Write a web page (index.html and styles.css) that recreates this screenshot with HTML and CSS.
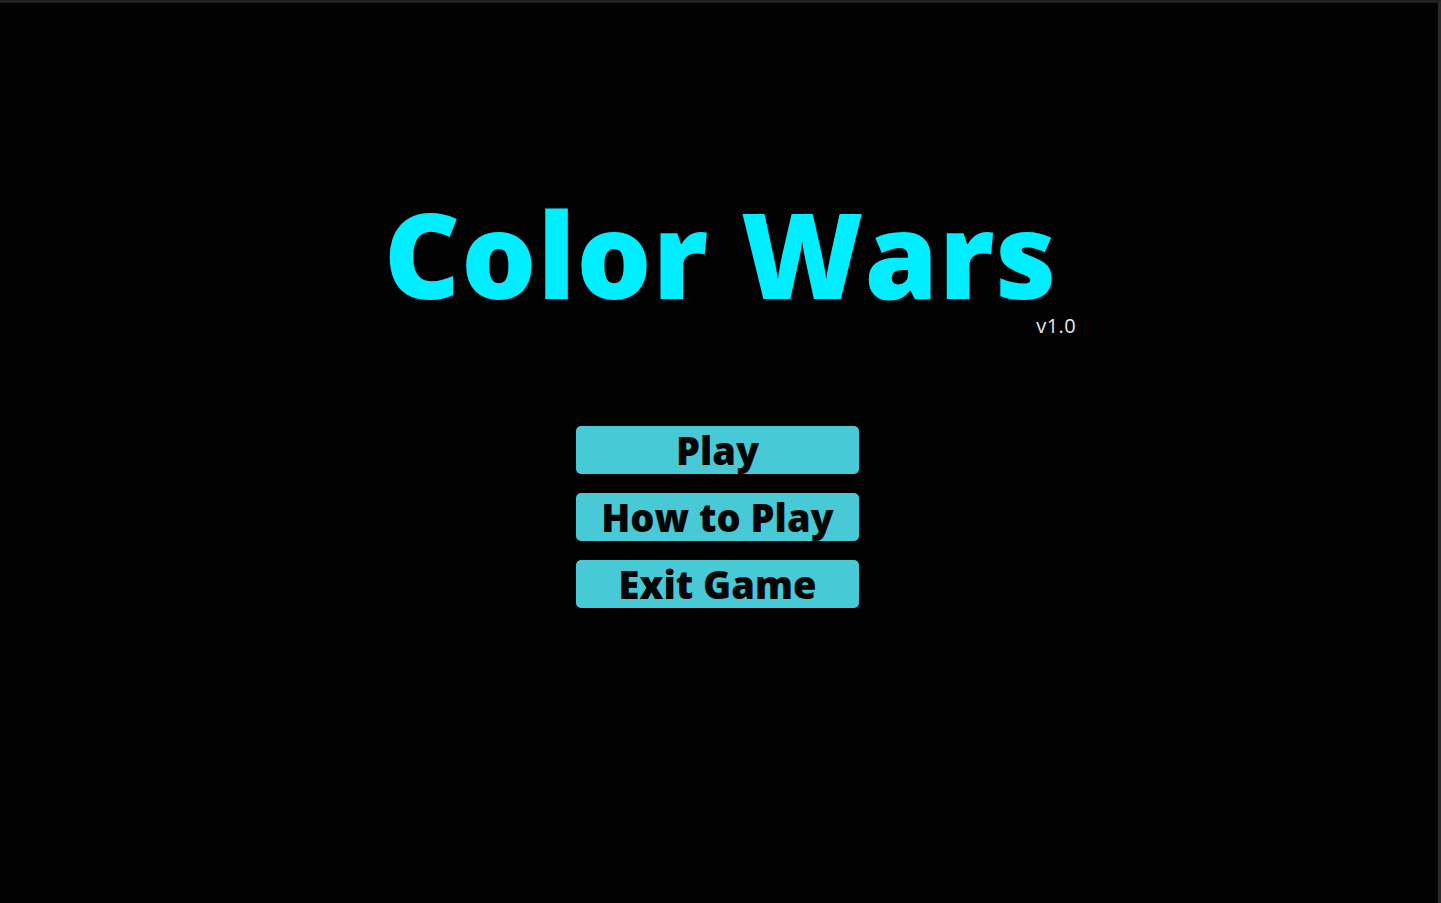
FILE: index.html
```html
<!DOCTYPE html>
<html lang="en">

<head>
  <meta charset="UTF-8">
  <meta name="viewport" content="width=device-width, initial-scale=1.0">
  <title>Color Wars</title>
  <link rel="stylesheet" href="styles.css">
</head>

<body>
  <div class="menu">
    <div class="menu-header">
      <h1 class="title">Color Wars</h1>
      <span class="version">v1.0</span>
    </div>

    <div class="menu-buttons">
      <button class="btn">Play</button>
      <button class="btn">How to Play</button>
      <button class="btn">Exit Game</button>
    </div>
  </div>
</body>

</html>
```

FILE: styles.css
```css
* {
  margin: 0;
  padding: 0;
  box-sizing: border-box;
}

body {
  background: #020202;
  min-height: 100vh;
  border-top: 3px solid #1f2023;
  border-right: 3px solid #2b2b2b;
  font-family: "Open Sans", sans-serif;
}

.menu {
  display: flex;
  flex-direction: column;
  align-items: center;
  padding-top: 191px;
}

.menu-header {
  display: flex;
  flex-direction: column;
  align-items: flex-end;
  margin-left: 3px;
}

.title {
  color: #00eeff;
  font-size: 118px;
  font-weight: 800;
  line-height: 120px;
  letter-spacing: 1px;
}

.version {
  color: #e8e8e8;
  font-size: 20px;
  line-height: 24px;
  letter-spacing: 0.5px;
  margin-right: -19px;
}

.menu-buttons {
  display: flex;
  flex-direction: column;
  gap: 19px;
  margin-top: 88px;
  margin-right: 3px;
}

.btn {
  width: 283px;
  height: 48px;
  background: #48c9d6;
  border: none;
  border-radius: 5px;
  color: #050505;
  font-family: "Open Sans", sans-serif;
  font-size: 38px;
  font-weight: 800;
  line-height: 48px;
  cursor: pointer;
}
```
